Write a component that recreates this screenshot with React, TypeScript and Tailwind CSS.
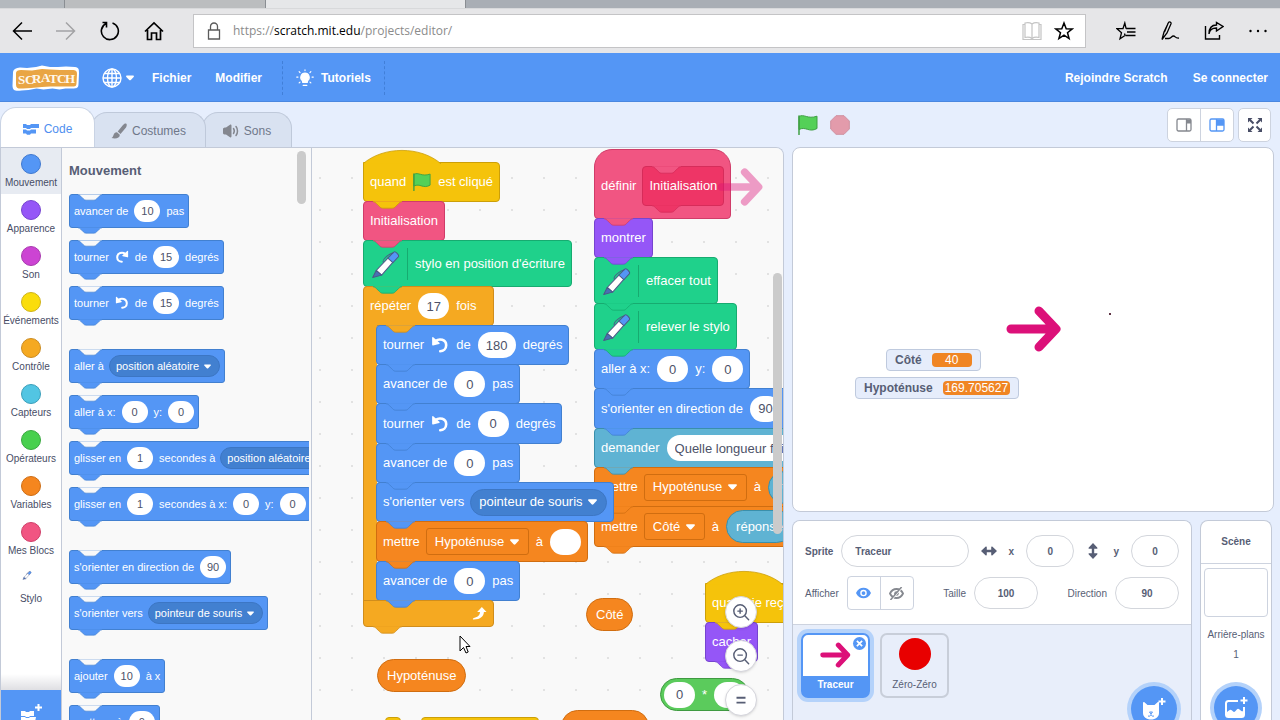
import React from 'react';
import clsx from 'clsx';

type Tone = 'motion' | 'looks' | 'events' | 'control' | 'sensing' | 'operators' | 'variables' | 'custom' | 'pen';

const tones: Record<Tone, { box: string; shape: string; field: string }> = {
  motion: { box: 'bg-[#5496f5] border-[#4280d0]', shape: 'fill-[#5496f5] stroke-[#4280d0]', field: 'bg-[#4280d0] border-[#3c76c4]' },
  looks: { box: 'bg-[#9556f7] border-[#7645cf]', shape: 'fill-[#9556f7] stroke-[#7645cf]', field: 'bg-[#7645cf] border-[#7645cf]' },
  events: { box: 'bg-[#f5c30b] border-[#cc9f08]', shape: 'fill-[#f5c30b] stroke-[#cc9f08]', field: 'bg-[#cc9f08] border-[#cc9f08]' },
  control: { box: 'bg-[#f5a921] border-[#d08d1c]', shape: 'fill-[#f5a921] stroke-[#d08d1c]', field: 'bg-[#d08d1c] border-[#d08d1c]' },
  sensing: { box: 'bg-[#5fb3d3] border-[#3a8fab]', shape: 'fill-[#5fb3d3] stroke-[#3a8fab]', field: 'bg-[#3a8fab] border-[#3a8fab]' },
  operators: { box: 'bg-[#5bcb5c] border-[#3f9a41]', shape: 'fill-[#5bcb5c] stroke-[#3f9a41]', field: 'bg-[#3f9a41] border-[#3f9a41]' },
  variables: { box: 'bg-[#f5861f] border-[#d06d10]', shape: 'fill-[#f5861f] stroke-[#d06d10]', field: 'bg-[#f5861f] border-[#d06d10]' },
  custom: { box: 'bg-[#f15582] border-[#d03c69]', shape: 'fill-[#f15582] stroke-[#d03c69]', field: 'bg-[#ee3566] border-[#d62c5a]' },
  pen: { box: 'bg-[#1fd18b] border-[#17ab70]', shape: 'fill-[#1fd18b] stroke-[#17ab70]', field: 'bg-[#17ab70] border-[#17ab70]' },
};

const NOTCH = 'M0 0c2 0 3 1 4 2l4 4c1 1 2 2 4 2h12c2 0 3-1 4-2l4-4c1-1 2-2 4-2';

const Tooth: React.FC<{ small?: boolean; className: string }> = ({ small, className }) => (
  <svg viewBox="0 -1 36 10" className={clsx('absolute z-10', small ? 'w-6 h-[7px]' : 'w-[29px] h-2', className)}>
    <path d="M0-1H36V0H0z" className="stroke-none" />
    <path d={NOTCH} />
  </svg>
);

interface BlockProps {
  tone: Tone;
  small?: boolean;
  hat?: boolean;
  notch?: boolean;
  tooth?: string;
  className?: string;
  children?: React.ReactNode;
}

const Block: React.FC<BlockProps> = ({ tone, small, hat, notch, tooth, className, children }) => (
  <div
    className={clsx(
      'relative flex items-center w-max shrink-0 border whitespace-nowrap text-white',
      small ? 'gap-1.5 px-1 h-[34px] rounded-[3px] text-[11px]' : 'gap-[7px] px-1.5 rounded-[4px] text-[13px]',
      hat && 'rounded-tl-none',
      tones[tone].box,
      className ?? (small ? '' : 'h-10 -mt-px'),
    )}
  >
    {hat && (
      <svg viewBox="0 0 96 18" className={clsx('absolute bottom-full -left-px -mb-px w-[78px] h-[15px]', tones[tone].shape)}>
        <path d="M0 18c25-22 71-22 96 0" />
      </svg>
    )}
    {notch && <Tooth small={small} className="-top-px left-2 fill-[#f9f9f9] stroke-[#4280d0]" />}
    {children}
    <Tooth small={small} className={clsx('top-full', tooth ?? (small ? 'left-2' : 'left-[9px]'), tones[tone].shape)} />
  </div>
);

const Num: React.FC<{ value: string; label: string; small?: boolean; className?: string }> = ({ value, label, small, className }) => (
  <input
    aria-label={label}
    defaultValue={value}
    className={clsx(
      'shrink-0 rounded-full bg-white text-center text-[#4d5268]',
      small ? 'h-[22px] text-[11px]' : 'h-[26px] text-[13px]',
      className ?? (small ? 'w-[26px]' : 'w-[31px]'),
    )}
  />
);

const Drop: React.FC<{ value: string; label: string; tone: Tone; small?: boolean; square?: boolean }> = ({ value, label, tone, small, square }) => (
  <span className={clsx('relative flex items-center border', tones[tone].field, small ? 'h-[22px] -ml-px' : 'h-[27px] -ml-px', square ? 'rounded-[3px]' : 'rounded-full')}>
    <select aria-label={label} className={clsx('appearance-none h-full bg-transparent outline-none', small ? 'pl-1.5 pr-[19px]' : 'pl-2 pr-[23px]')}>
      <option>{value}</option>
    </select>
    <svg viewBox="0 0 10 6" className={clsx('absolute pointer-events-none fill-white', small ? 'w-[7px] h-[5px] right-2' : 'w-[9px] h-[6px] right-[9px]')}>
      <path d="M1 0h8c1 0 1.200 1 .6 1.600L6 5.500c-.6.600-1.400.600-2 0L.4 1.600C-.2 1 0 0 1 0z" />
    </svg>
  </span>
);

const Turn: React.FC<{ dir: 'left' | 'right'; small?: boolean }> = ({ dir, small }) => (
  <svg viewBox="0 0 16 16" className={clsx('shrink-0', small ? 'size-[14px]' : 'size-[18px]', dir === 'right' && '-scale-x-100')}>
    <path d="M4 4.500C7.500 1.800 13.500 3 13.500 8.300c0 3.200-2.500 5.200-5.300 5.200" fill="none" stroke="white" strokeWidth="2.300" strokeLinecap="round" />
    <path d="M1 1.500v6.300c0 .5.400.8.800.600L7.200 7c.6-.2.700-.7.300-1.100L2 1C1.600.700 1 .900 1 1.500z" fill="white" />
  </svg>
);

const Flag: React.FC<{ className: string }> = ({ className }) => (
  <svg viewBox="0 0 20 20" className={className}>
    <path d="M1 1.500C6-1.500 9.500 4.500 19 1.200V13.500C11 18 8 11 1 14.500z" fill="#54d058" stroke="#3f9f43" strokeWidth="1" strokeLinejoin="round" />
    <path d="M1 1v18.500" stroke="#3f9f43" strokeWidth="1.500" strokeLinecap="round" />
  </svg>
);

const Pen: React.FC<{ className?: string }> = ({ className = 'size-[31px]' }) => (
  <svg viewBox="0 0 40 40" className={className} strokeLinejoin="round" strokeLinecap="round" stroke="#4a5a86" strokeWidth="1.300">
    <path d="M8 29 24 12l6 6-15 17z" fill="white" />
    <path d="M23 13 30.500 5.500c2-2 8 3.500 6 6L29.500 19z" fill="#5496f5" />
    <path d="M8 29 3.500 38l11.500-3z" fill="#4a6fb5" />
    <path d="M17 18c-1-3 6-10 13-12" fill="none" />
  </svg>
);

const PenBlock: React.FC<{ text: string }> = ({ text }) => (
  <Block tone="pen" className="h-[47px] -mt-px">
    <span className="flex h-8 items-center border-r border-[#17ab70] pr-1.5"><Pen /></span>
    {text}
  </Block>
);

const Reporter: React.FC<{ tone: Tone; className?: string; children?: React.ReactNode }> = ({ tone, className = 'w-max px-[9px]', children }) => (
  <div className={clsx('flex shrink-0 items-center h-[33px] rounded-full border text-[13px] text-white whitespace-nowrap', tones[tone].box, className)}>
    {children}
  </div>
);

/* Browser chrome */
const BrowserBar = () => (
  <>
    <div className="flex h-2 shrink-0 bg-[#a9aeb5]">
      <div className="w-[65px] border-r border-[#8a8e93] bg-[#b4b9be]" />
      <div className="w-[201px] border-r border-[#8a8e93] bg-[#bbbdbf]" />
      <div className="w-[200px] border-r border-[#8a8e93] bg-[#e6e7e9]" />
    </div>
    <div className="flex h-[45px] shrink-0 items-center border-t border-[#d8d9db] bg-[#e6e6e8] pr-3">
      <div className="flex items-center gap-6 pl-3 text-black">
        <button aria-label="Précédent">
          <svg viewBox="0 0 20 20" className="size-5" fill="none" stroke="currentColor" strokeWidth="1.500"><path d="M20 10H1.500M10 1.500 1.500 10l8.500 8.500" /></svg>
        </button>
        <button aria-label="Suivant" className="text-[#a3a3a5]">
          <svg viewBox="0 0 20 20" className="size-5" fill="none" stroke="currentColor" strokeWidth="1.500"><path d="M0 10h18.500M10 1.500l8.500 8.500-8.500 8.500" /></svg>
        </button>
        <button aria-label="Actualiser">
          <svg viewBox="0 0 20 20" className="size-5" fill="none" stroke="currentColor" strokeWidth="1.600"><path d="M12.500 2A8.500 8.500 0 1 1 6 2.500M2.500 1.500h4v5" /></svg>
        </button>
        <button aria-label="Accueil">
          <svg viewBox="0 0 20 20" className="size-5" fill="none" stroke="currentColor" strokeWidth="1.700"><path d="M1 10.500 10 2l9 8.500M3.500 9v9.500h4V12h5v6.500h4V9" /></svg>
        </button>
      </div>
      <div className="ml-[29px] flex h-[34px] flex-1 items-center border border-[#c4c4c6] bg-white pl-[13px] pr-[11px]">
        <svg viewBox="0 0 14 18" className="h-[18px] w-[14px]" fill="none" stroke="#5b5b5b" strokeWidth="1.300"><path d="M1.500 8h11v9h-11zM3.500 8V4.500a3.500 3.500 0 0 1 7 0V8" /></svg>
        <a href="#" className="ml-3 font-['Open_Sans','Noto_Sans',sans-serif] text-[12px] text-[#8b8b8b]">
          https://<span className="text-black">scratch.mit.edu</span>/projects/editor/
        </a>
        <button aria-label="Mode lecture" className="ml-auto">
          <svg viewBox="0 0 20 20" className="size-5" fill="none" stroke="#c4c4c4" strokeWidth="1.200"><path d="M10 3C8 1.500 5 1.500 3 2v14.500c2-.5 5-.5 7 1 2-1.500 5-1.500 7-1V2c-2-.5-5-.5-7 1zv14.500M3 3.500H1v15h18v-15h-2" /></svg>
        </button>
        <button aria-label="Ajouter aux favoris" className="ml-3">
          <svg viewBox="0 0 20 20" className="size-5" fill="none" stroke="black" strokeWidth="1.500"><path d="m10 2 2.200 5.700 6 .2-4.700 3.800 1.600 5.900-5.100-3.400-5.100 3.400 1.600-5.900L1.800 7.900l6-.2z" /></svg>
        </button>
      </div>
      <div className="ml-[30px] flex items-center gap-6">
        <button aria-label="Favoris">
          <svg viewBox="0 0 20 20" className="size-5" fill="none" stroke="black" strokeWidth="1.300"><path d="M8.500 12.500 9 14.500M12 7.500 10 7.200 8.800 2 7 7.500l-6 .2 4.500 4L4 17.800l5-3.300M10 7.500h9.500M11 11h8.500M9.500 14.500h10" /></svg>
        </button>
        <button aria-label="Annoter">
          <svg viewBox="0 0 20 20" className="size-5" fill="none" stroke="black" strokeWidth="1.300"><path d="M2 18.500 4 11 8.500 1.500c.8-1.200 3-.2 2.500 1.300L7 12l-5 6.500zM8 2.500 4.500 11M5 17.500h4c2 0 2.500-2.500 4.500-2.500s1.500 2.500 5.500 2" /></svg>
        </button>
        <button aria-label="Partager">
          <svg viewBox="0 0 20 20" className="size-5" fill="none" stroke="black" strokeWidth="1.400"><path d="M1.500 5v13h14v-4M5 13c.5-4 3-6 7.500-6V10L19 5.500 12.500 1.500V4C8 4 5 7 5 13z" /></svg>
        </button>
        <button aria-label="Plus">
          <svg viewBox="0 0 20 20" className="size-5"><circle cx="2.500" cy="10" r="1.200" /><circle cx="10" cy="10" r="1.200" /><circle cx="17.500" cy="10" r="1.200" /></svg>
        </button>
      </div>
    </div>
  </>
);

const MenuBar = () => (
  <header className="flex h-[49px] shrink-0 items-center border-b border-[#4a87e0] bg-[#5496f5] px-3 pt-px text-[12px] font-bold text-white">
    <a href="#" aria-label="Scratch">
      <svg viewBox="0 0 68 26" className="h-[26px] w-[68px]">
        <path d="M1 8C1 4 4 3 8 2.500l7 .5 9-1 6-1.500 8 1.500h8l8-.5 9 .5c4 .3 4 3 4 6l-.5 11c0 4-2 4.500-6 4.500h-7l-6 1-7-1-9 1-7-1-8 1.500-7 .5c-6 1-9 0-9-5z" fill="white" />
        <path d="M4 8c0-2 2-3 5-3l11 .5L30 4l8 .500 10 .5 12 0c4 0 5 1 5 4l-.5 9c0 3-1 3.500-5 3.500H38l-8 .5-11 1-8 .5c-5 .5-7-.5-7-4z" fill="#e9a544" />
        <text x="6 13 20 29 37 45 53" y="19 19 18 17 18 18 18" fontFamily="Liberation Serif, serif" fontWeight="700" fontSize="13" fill="#fff8ec">SCRATCH</text>
      </svg>
    </a>
    <button aria-label="Langue" className="ml-[22px] flex items-center gap-1">
      <svg viewBox="0 0 20 20" className="size-5" fill="none" stroke="white" strokeWidth="1.400"><circle cx="10" cy="10" r="9" /><ellipse cx="10" cy="10" rx="4.500" ry="9" /><path d="M10 1v18M1 10h18M2.500 5.500h15M2.500 14.500h15" /></svg>
      <svg viewBox="0 0 10 6" className="h-[6px] w-2 fill-white"><path d="M1 0h8c1 0 1.200 1 .6 1.600L6 5.500c-.6.600-1.400.600-2 0L.4 1.600C-.2 1 0 0 1 0z" /></svg>
    </button>
    <button className="ml-[18px]">Fichier</button>
    <button className="ml-6">Modifier</button>
    <button className="ml-5 flex h-[34px] items-center gap-[7px] border-x border-dashed border-[#417fd8] px-[13px]">
      <svg viewBox="0 0 20 20" className="size-[18px]" fill="white" stroke="white" strokeWidth="1.300" strokeLinecap="round">
        <path d="M10 4.500a4.700 4.700 0 0 1 3 8.300l-.5 2.200h-5L7 12.800a4.700 4.700 0 0 1 3-8.300z" />
        <path d="M8 18.200h4M10 .8v1M.8 9h1.400M17.800 9h1.400M3.500 3l1 1M16.500 3l-1 1M3.500 15.500l1-1M16.500 15.500l-1-1" />
      </svg>
      Tutoriels
    </button>
    <button className="ml-auto">Rejoindre Scratch</button>
    <button className="ml-[25px]">Se connecter</button>
  </header>
);

const Tabs = () => (
  <div role="tablist" className="flex h-[45px] shrink-0 items-end text-[12px]">
    <button role="tab" aria-selected className="z-20 flex h-10 w-[95px] items-center justify-center gap-[5px] rounded-t-2xl border border-b-0 border-[#c9d3e4] bg-white pt-0.5 text-[#4f8ff0]">
      <svg viewBox="0 0 16 12" className="h-3 w-4 fill-[#5496f5]"><path d="M0 1h3l1 1h3l1-1h8v4H8L7 6H4L3 5H0zM0 6.500h3l1 1h3l1-1h5v4H8l-1 1.300H4l-1-1.300H0z" /></svg>
      Code
    </button>
    <button role="tab" className="z-10 -ml-1 flex h-[35px] w-[115px] items-center justify-center gap-[5px] rounded-t-2xl border border-b-0 border-[#bfc9da] bg-[#d9e2f1] pt-0.5 text-[#6f7789]">
      <svg viewBox="0 0 16 16" className="size-4 fill-[#84878f]"><path d="M15 .500c1.200.5.800 2.500 0 4l-5.500 6.500-2.800-2.500L12 2C13 .900 14 .100 15 .500zM6 9.200l2.800 2.500c.2 3-3.500 4.500-8.300 3.300C3 14 2 9 6 9.200z" /></svg>
      Costumes
    </button>
    <button role="tab" className="-ml-1 flex h-[35px] w-[90px] items-center justify-center gap-[5px] rounded-t-2xl border border-b-0 border-[#bfc9da] bg-[#d9e2f1] pt-0.5 text-[#6f7789]">
      <svg viewBox="0 0 16 14" className="h-[14px] w-4"><path d="M0 5c0-1 1-1.500 3-1.500L7 .8C8 .2 8.500.8 8.500 2v10c0 1.200-.5 1.800-1.500 1.200L3 10.500C1 10.500 0 10 0 9z" fill="#84878f" /><path d="M10.500 4.500c1 1.500 1 3.500 0 5M13 2.500c2 2.500 2 6.500 0 9" fill="none" stroke="#84878f" strokeWidth="1.500" strokeLinecap="round" /></svg>
      Sons
    </button>
  </div>
);

const categories = [
  { name: 'Mouvement', dot: 'bg-[#5496f5] border-[#3f78cf]' },
  { name: 'Apparence', dot: 'bg-[#9556f7] border-[#7645cf]' },
  { name: 'Son', dot: 'bg-[#cc44d3] border-[#a83aae]' },
  { name: 'Événements', dot: 'bg-[#fadd0c] border-[#cfb31a]' },
  { name: 'Contrôle', dot: 'bg-[#f5a921] border-[#cb8c22]' },
  { name: 'Capteurs', dot: 'bg-[#52c5e3] border-[#3a9fba]' },
  { name: 'Opérateurs', dot: 'bg-[#48d04e] border-[#3aa840]' },
  { name: 'Variables', dot: 'bg-[#f5861f] border-[#cd6d14]' },
  { name: 'Mes Blocs', dot: 'bg-[#f15582] border-[#cf3f69]' },
];

const Categories = () => (
  <nav className="flex w-[62px] shrink-0 flex-col border-x border-[#c3cad8] bg-white">
    {categories.map((c, i) => (
      <button key={c.name} className={clsx('flex h-[46px] flex-col items-center gap-0.5 pt-1.5 text-[10px] leading-[14px] whitespace-nowrap text-[#484d66]', i === 0 && 'bg-[#e7ebf2]')}>
        <span className={clsx('size-5 shrink-0 rounded-full border', c.dot)} />
        {c.name}
      </button>
    ))}
    <button className="flex flex-col items-center gap-3 pt-2 text-[10px] leading-[14px] text-[#484d66]">
      <Pen className="mr-2 size-[10px]" />
      Stylo
    </button>
    <div className="mt-auto h-4 shrink-0 bg-linear-to-b from-white to-[#dfdfe3]" />
    <button aria-label="Ajouter une extension" className="flex h-[30px] shrink-0 justify-center bg-[#5496f5] pt-3.5">
      <svg viewBox="0 0 22 18" className="h-[18px] w-[22px] fill-white"><path d="M1 7h4l1 1h3l1-1h4v5h-4l-1 1H6l-1-1H1zM1 13h4l1 1h3l1-1h6l-1 5H1zM17.500 0h2v2.500H22v2h-2.500V7h-2V4.500H15v-2h2.500z" /></svg>
    </button>
  </nav>
);

const Palette = () => (
  <div className="relative flex w-[250px] shrink-0 flex-col border-r border-[#c3cad8] bg-[#f9f9f9] pl-[7px] pr-0.5">
    <h2 className="mt-3.5 mb-[15px] text-[13px] leading-[17px] font-bold text-[#575e75]">Mouvement</h2>
    <div className="flex min-h-0 flex-1 flex-col gap-[29px] overflow-hidden">
      <div className="flex flex-col gap-3">
        <Block small notch tone="motion">avancer de <Num small value="10" label="pas" /> pas</Block>
        <Block small notch tone="motion">tourner <Turn small dir="right" /> de <Num small value="15" label="degrés" /> degrés</Block>
        <Block small notch tone="motion">tourner <Turn small dir="left" /> de <Num small value="15" label="degrés" /> degrés</Block>
      </div>
      <div className="flex flex-col gap-3">
        <Block small notch tone="motion">aller à <Drop small tone="motion" value="position aléatoire" label="destination" /></Block>
        <Block small notch tone="motion">aller à x: <Num small value="0" label="x" /> y: <Num small value="0" label="y" /></Block>
        <Block small notch tone="motion">glisser en <Num small value="1" label="secondes" /> secondes à <Drop small tone="motion" value="position aléatoire" label="destination" /></Block>
        <Block small notch tone="motion">glisser en <Num small value="1" label="secondes" /> secondes à x: <Num small value="0" label="x" /> y: <Num small value="0" label="y" /></Block>
      </div>
      <div className="flex flex-col gap-3">
        <Block small notch tone="motion">s'orienter en direction de <Num small value="90" label="direction" /></Block>
        <Block small notch tone="motion">s'orienter vers <Drop small tone="motion" value="pointeur de souris" label="cible" /></Block>
      </div>
      <div className="flex flex-col gap-3">
        <Block small notch tone="motion">ajouter <Num small value="10" label="x" /> à x</Block>
        <Block small notch tone="motion">mettre x à <Num small value="0" label="x" /></Block>
      </div>
    </div>
    <div className="absolute top-[3px] right-[5px] h-[53px] w-[9px] rounded-full bg-[#cbcbcb]" />
  </div>
);

const MainStack = () => (
  <div className="absolute left-[51px] top-[14px] isolate z-20 flex flex-col items-start">
    <Block hat tone="events" className="h-10">quand <Flag className="size-[18px]" /> est cliqué</Block>
    <Block tone="custom">Initialisation</Block>
    <PenBlock text="stylo en position d'écriture" />
    <Block tone="control" tooth="left-[22px]" className="h-10 -mt-px min-w-[131px] rounded-bl-none">répéter <Num value="17" label="fois" /> fois</Block>
    <div className="flex">
      <div className="relative -my-px w-[14px] border-l border-[#d08d1c] bg-[#f5a921]" />
      <div className="-ml-px flex flex-col items-start">
        <Block tone="motion">tourner <Turn dir="left" /> de <Num value="180" label="degrés" className="w-[38px]" /> degrés</Block>
        <Block tone="motion">avancer de <Num value="0" label="pas" /> pas</Block>
        <Block tone="motion" className="h-[41px] -mt-px">tourner <Turn dir="left" /> de <Num value="0" label="degrés" /> degrés</Block>
        <Block tone="motion">avancer de <Num value="0" label="pas" /> pas</Block>
        <Block tone="motion">s'orienter vers <Drop tone="motion" value="pointeur de souris" label="cible" /></Block>
        <Block tone="variables" className="h-[41px] -mt-px">mettre <Drop square tone="variables" value="Hypoténuse" label="variable" /> à <Num value="" label="valeur" /></Block>
        <Block tone="motion">avancer de <Num value="0" label="pas" /> pas</Block>
      </div>
    </div>
    <Block tone="control" className="h-[27px] -mt-px min-w-[131px] justify-end rounded-tl-none">
      <svg viewBox="0 0 16 16" className="size-[15px] fill-white"><path d="M10.500 1 15.500 6.500h-2.800C12.500 11 9 14.500 2 14.500c-1.500 0-1.500-1.500 0-1.800 4.500-.7 6.500-3 6.500-6.200H5.500z" /></svg>
    </Block>
  </div>
);

const DefineStack = () => (
  <div className="absolute left-[282px] top-px isolate flex flex-col items-start">
    <Block tone="custom" className="h-[70px] rounded-t-[18px] pt-1">
      définir
      <div className="relative -ml-px flex h-[40px] items-center rounded-[4px] border border-[#d62c5a] bg-[#ee3566] px-1.5">
        <Tooth className="-top-px left-[9px] fill-[#f15582] stroke-[#d62c5a]" />
        Initialisation
        <Tooth className="top-full left-[9px] fill-[#ee3566] stroke-[#d62c5a]" />
      </div>
    </Block>
    <Block tone="looks">montrer</Block>
    <PenBlock text="effacer tout" />
    <PenBlock text="relever le stylo" />
    <Block tone="motion">aller à x: <Num value="0" label="x" /> y: <Num value="0" label="y" /></Block>
    <Block tone="motion" className="h-[41px] -mt-px">s'orienter en direction de <Num value="90" label="direction" /></Block>
    <Block tone="sensing">
      demander <input aria-label="question" defaultValue="Quelle longueur fait le côté ?" className="h-[26px] w-[190px] rounded-full bg-white px-2 text-[#4d5268]" />
    </Block>
    <Block tone="variables">
      mettre <Drop square tone="variables" value="Hypoténuse" label="variable" /> à <Reporter tone="sensing">réponse</Reporter>
    </Block>
    <Block tone="variables" className="h-[41px] -mt-px">
      mettre <Drop square tone="variables" value="Côté" label="variable" /> à <Reporter tone="sensing">réponse</Reporter>
    </Block>
  </div>
);

const Arrow: React.FC<{ className: string }> = ({ className }) => (
  <svg viewBox="0 0 56 46" className={className} fill="none" stroke="#dc1079" strokeWidth="9" strokeLinecap="round" strokeLinejoin="round">
    <path d="M5 23h44M33 5l17 18-17 18" />
  </svg>
);

const zoomButton = 'flex size-8 items-center justify-center rounded-full border border-[#d5d5dc] bg-white shadow-sm';

const Workspace = () => (
  <div className="relative min-w-0 flex-1 overflow-hidden bg-[#f9f9f9] bg-[radial-gradient(circle,#e2e2e2_1px,transparent_1px)] bg-[size:32px_32px] bg-[position:24px_14px]">
    <DefineStack />
    <MainStack />
    <Arrow className="absolute left-[405px] top-5 h-[38px] w-[47px] opacity-40" />
    <Reporter tone="variables" className="absolute left-[274px] top-[450px] px-[9px]">Côté</Reporter>
    <Reporter tone="variables" className="absolute left-[65px] top-[511px] px-[9px]">Hypoténuse</Reporter>
    <Reporter tone="variables" className="absolute left-[249px] top-[562px] w-[88px]" />
    <div className="absolute left-[393px] top-[435px] flex flex-col items-start">
      <Block hat tone="events" className="h-10">quand je reçois <Drop square tone="events" value="message1" label="message" /></Block>
      <Block tone="looks">cacher</Block>
    </div>
    <Reporter tone="operators" className="absolute left-[348px] top-[530px] gap-[7px] px-[3px]">
      <Num value="0" label="opérande" /> * <Num value="" label="opérande" />
    </Reporter>
    <div className="absolute left-[73px] top-[569px] h-5 w-4 rounded-t-[4px] border border-[#cc9f08] bg-[#f5c30b]" />
    <div className="absolute left-[109px] top-[569px] h-5 w-[118px] rounded-t-[4px] border border-[#cc9f08] bg-[#f5c30b]" />

    <div className="absolute right-[26px] top-[448px] z-30 flex flex-col gap-3 text-[#575e75]">
      <button aria-label="Zoom avant" className={zoomButton}>
        <svg viewBox="0 0 20 20" className="size-[18px]" fill="none" stroke="currentColor" strokeWidth="1.600" strokeLinecap="round"><circle cx="9" cy="9" r="7" /><path d="m14.500 14.500 4 4M6.500 9h5M9 6.500v5" /></svg>
      </button>
      <button aria-label="Zoom arrière" className={zoomButton}>
        <svg viewBox="0 0 20 20" className="size-[18px]" fill="none" stroke="currentColor" strokeWidth="1.600" strokeLinecap="round"><circle cx="9" cy="9" r="7" /><path d="m14.500 14.500 4 4M6.500 9h5" /></svg>
      </button>
      <button aria-label="Taille normale" className={zoomButton}>
        <svg viewBox="0 0 20 20" className="size-[18px]" stroke="currentColor" strokeWidth="2"><path d="M5 7.500h10M5 13h10" /></svg>
      </button>
    </div>
    <div className="absolute right-px top-[125px] z-30 h-[261px] w-[9px] rounded-full bg-[#cbcbcb]" />
    <svg viewBox="0 0 12 19" className="absolute left-[147px] top-[487px] z-40 h-[19px] w-3"><path d="M1 1v15l3.500-3.500L7 18l2.200-1L7 11.500h4z" fill="white" stroke="black" /></svg>
  </div>
);

const StageHeader = () => (
  <div className="flex h-[45px] shrink-0 items-center pl-1.5 pr-[3px]">
    <button aria-label="Démarrer"><Flag className="size-5" /></button>
    <button aria-label="Arrêter" className="ml-3">
      <svg viewBox="0 0 20 20" className="size-5"><path d="M6 .7h8L19.300 6v8L14 19.300H6L.7 14V6z" fill="#e39bab" stroke="#cf90a0" strokeLinejoin="round" /></svg>
    </button>
    <div className="ml-auto flex h-[34px] rounded-[5px] border border-[#cdd3df] bg-white">
      <button aria-label="Petite scène" className="flex w-[33px] items-center justify-center border-r border-[#cdd3df]">
        <svg viewBox="0 0 16 16" className="size-4" fill="none" stroke="#85888f" strokeWidth="1.300"><rect x="1" y="2" width="14" height="12" rx="1.500" /><path d="M10.500 2v12" /><path d="M11 2.500h4v4h-4z" fill="#85888f" stroke="none" /></svg>
      </button>
      <button aria-label="Grande scène" className="flex w-8 items-center justify-center">
        <svg viewBox="0 0 16 16" className="size-4" fill="none" stroke="#5496f5" strokeWidth="1.300"><rect x="1" y="2" width="14" height="12" rx="1.500" /><path d="M7.500 2v12M7.500 8H15" /><path d="M8 2.500h7V8H8z" fill="#5496f5" stroke="none" /></svg>
      </button>
    </div>
    <button aria-label="Plein écran" className="ml-1 flex h-[34px] w-[33px] items-center justify-center rounded-[5px] border border-[#cdd3df] bg-white">
      <svg viewBox="0 0 16 16" className="size-4 fill-[#484d66] stroke-[#484d66]" strokeWidth="2"><path d="m3 3 3.500 3.500M13 3 9.500 6.500M3 13l3.500-3.500M13 13 9.500 9.500" /><path d="M1 1h4.500L1 5.500zM15 1h-4.500L15 5.500zM1 15h4.500L1 10.500zM15 15h-4.500l4.500-4.500z" stroke="none" /></svg>
    </button>
  </div>
);

const monitor = 'absolute flex h-[22px] items-center rounded-[4px] border border-[#bfcade] bg-[#e6edfb] px-2 text-[12px] font-bold text-[#575e75]';

const Stage = () => (
  <div className="relative aspect-[482/365] shrink-0 rounded-lg border border-[#c3cad8] bg-white">
    <Arrow className="absolute left-[213px] top-[158px] h-[46px] w-14" />
    <div className="absolute left-[316px] top-[165px] size-0.5 bg-[#5e3445]" />
    <div className={clsx(monitor, 'left-[93px] top-[201px] gap-[10px]')}>
      Côté <span className="w-10 rounded-[4px] bg-[#f08523] text-center text-[12px] leading-[14px] font-normal text-white">40</span>
    </div>
    <div className={clsx(monitor, 'left-[62px] top-[229px] gap-[10px]')}>
      Hypoténuse <span className="rounded-[4px] bg-[#f08523] px-0.5 text-center text-[12px] leading-[14px] font-normal text-white">169.705627</span>
    </div>
  </div>
);

const pill = 'h-8 rounded-full border border-[#d3d6dc] bg-white text-[10px] font-bold text-[#575e75]';

const SpritePane = () => (
  <section className="relative flex flex-1 flex-col overflow-hidden rounded-t-lg border border-b-0 border-[#c3cad8] bg-[#e8eefa]">
    <div className="flex flex-col gap-[9px] border-b border-[#cdd3df] bg-white py-3.5 pl-3 pr-3 text-[10px] text-[#575e75]">
      <div className="flex items-center justify-between">
        <label className="flex items-center gap-2 font-bold">Sprite <input defaultValue="Traceur" className={clsx(pill, 'w-32 px-[13px]')} /></label>
        <label className="flex items-center gap-3 font-bold">
          <svg viewBox="0 0 16 10" className="h-[10px] w-4 fill-[#575e75]"><path d="M0 5 4.500.8C5.300.2 5.800.6 5.800 1.500v2.300h4.400V1.500c0-.9.5-1.300 1.300-.7L16 5l-4.500 4.200c-.8.600-1.300.2-1.300-.7V6.200H5.800v2.300c0 .9-.5 1.300-1.300.7z" /></svg>
          x <input defaultValue="0" className={clsx(pill, 'w-12 text-center')} />
        </label>
        <label className="flex items-center gap-3 font-bold">
          <svg viewBox="0 0 10 16" className="h-4 w-4 fill-[#575e75]"><path d="M5 0 9.200 4.500c.6.800.2 1.300-.7 1.300H6.200v4.400h2.300c.9 0 1.300.5.7 1.300L5 16 .8 11.500c-.6-.8-.2-1.300.7-1.300h2.300V5.800H1.500C.6 5.800.2 5.300.8 4.500z" /></svg>
          y <input defaultValue="0" className={clsx(pill, 'w-12 text-center')} />
        </label>
      </div>
      <div className="flex items-center justify-between">
        <div className="flex items-center gap-2">
          Afficher
          <div className="flex h-[34px] rounded-[4px] border border-[#cdd3df]">
            <button aria-label="Afficher le sprite" className="flex w-[33px] items-center justify-center border-r border-[#cdd3df]">
              <svg viewBox="0 0 16 12" className="h-3 w-[15px]"><path d="M0 6C3-1.500 13-1.500 16 6 13 13.500 3 13.500 0 6z" fill="#5496f5" /><circle cx="8" cy="6" r="3.500" fill="white" /><circle cx="8" cy="6" r="2" fill="#5496f5" /></svg>
            </button>
            <button aria-label="Cacher le sprite" className="flex w-8 items-center justify-center">
              <svg viewBox="0 0 16 14" className="h-[13px] w-[15px]"><path d="M1 7C4 .500 12 .500 15 7 12 13.500 4 13.500 1 7z" fill="none" stroke="#85888f" strokeWidth="2" /><circle cx="8" cy="7" r="2.500" fill="#85888f" /><path d="M14.500 0 2.500 14" stroke="white" strokeWidth="1.500" /><path d="M13.500 0 1.500 14" stroke="#85888f" strokeWidth="1.600" /></svg>
            </button>
          </div>
        </div>
        <label className="flex items-center gap-2">Taille <input defaultValue="100" className={clsx(pill, 'w-16 text-center')} /></label>
        <label className="flex items-center gap-2">Direction <input defaultValue="90" className={clsx(pill, 'w-16 text-center')} /></label>
      </div>
    </div>
    <div className="flex gap-[10px] p-2 text-[10px]">
      <button className="relative flex h-[65px] w-[69px] flex-col items-center rounded-[7px] border-2 border-[#5496f5] bg-white text-white ring-4 ring-[#b4d2fa]">
        <Arrow className="mt-[7px] h-[26px] w-[31px]" />
        <span className="mt-auto w-full bg-[#5496f5] pb-0.5 font-bold leading-[18px]">Traceur</span>
        <span className="absolute top-0.5 right-0.5 flex size-[13px] items-center justify-center rounded-full bg-[#5496f5]">
          <svg viewBox="0 0 8 8" className="size-[7px]" stroke="white" strokeWidth="2"><path d="m1 1 6 6M7 1 1 7" /></svg>
        </span>
      </button>
      <button className="flex h-[65px] w-[69px] flex-col items-center rounded-[7px] border-2 border-[#c8ced9] text-[#575e75]">
        <span className="mt-[3px] size-8 rounded-full bg-[#e80000]" />
        <span className="mt-auto pb-0.5 leading-[18px]">Zéro-Zéro</span>
      </button>
    </div>
    <button aria-label="Choisir un sprite" className="absolute top-[165px] right-[14px] flex size-[46px] items-center justify-center rounded-full bg-[#5496f5] ring-4 ring-[#b4d2fa]">
      <svg viewBox="0 0 24 22" className="h-[22px] w-6 fill-white"><path d="M1 5c0-1.200 1-1.200 1.700-.5L5.500 7h7l2.800-2.500C16 3.800 17 4 17 5v10c0 4-3.500 6.500-8 6.500S1 19 1 15zM19 0h2v2.500h2.500v2H21V7h-2V4.500h-2.500v-2H19z" /><path d="M7.500 14h3L9 16zM6 18c1.500.5 2.500 0 3-1.500.5 1.500 1.500 2 3 1.500" fill="none" stroke="#5496f5" /></svg>
    </button>
  </section>
);

const ScenePane = () => (
  <section className="relative mr-0.5 flex w-[72px] shrink-0 flex-col items-center overflow-hidden rounded-t-lg border border-b-0 border-[#c3cad8] bg-white text-[10px] text-[#575e75]">
    <h3 className="w-full border-b border-[#cdd3df] text-center font-bold leading-[42px]">Scène</h3>
    <button aria-label="Scène" className="mt-1 h-[49px] w-16 shrink-0 rounded-[4px] border border-[#cdd3df] bg-white" />
    <span className="mt-2 leading-5 whitespace-nowrap">Arrière-plans</span>
    <span className="leading-5">1</span>
    <button aria-label="Choisir un arrière-plan" className="absolute top-[165px] flex size-[44px] items-center justify-center rounded-full bg-[#5496f5] ring-4 ring-[#b4d2fa]">
      <svg viewBox="0 0 24 22" className="h-[22px] w-6"><path d="M14 4H4.500C3 4 2 5 2 6.500v11C2 19 3 20 4.500 20h13c1.500 0 2.500-1 2.500-2.500V10" fill="none" stroke="white" strokeWidth="2" /><path d="M3 15c2-1.500 3.500-3.500 5-1.500 1.500 1.500 2 2 3.500.500s2-3.500 4-1.500 3 2 4.500 1.500v5.500H3zM19 0h2v2.500h2.500v2H21V7h-2V4.500h-2.500v-2H19z" fill="white" /></svg>
    </button>
  </section>
);

const App: React.FC = () => {
  return (
    <div className="flex h-screen flex-col overflow-hidden bg-[#e6eefd] font-['Liberation_Sans',Arial,sans-serif]">
      <BrowserBar />
      <MenuBar />
      <main className="flex min-h-0 flex-1 gap-2 pr-1.5">
        <div className="flex min-w-0 flex-1 flex-col">
          <Tabs />
          <div className="flex min-h-0 flex-1 overflow-hidden rounded-tr-lg border-t border-r border-[#c3cad8]">
            <Categories />
            <Palette />
            <Workspace />
          </div>
        </div>
        <div className="flex w-[482px] shrink-0 flex-col">
          <StageHeader />
          <Stage />
          <div className="mt-2 flex min-h-0 flex-1 gap-2">
            <SpritePane />
            <ScenePane />
          </div>
        </div>
      </main>
    </div>
  );
};

export default App;
